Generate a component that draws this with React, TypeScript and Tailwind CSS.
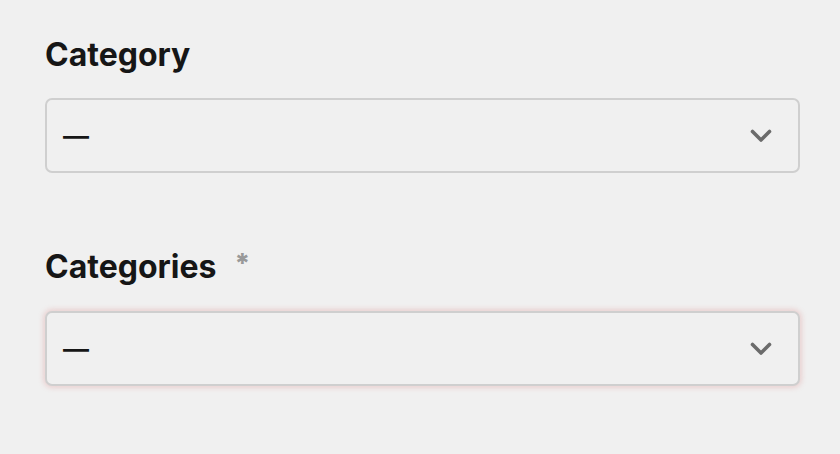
import React from "react";

function Chevron() {
  return (
    <svg width="22" height="14" viewBox="0 0 22 14" fill="none">
      <path d="M2.5 2.5 L11 11 L19.5 2.5" stroke="#6b6b6b" strokeWidth="3.6" strokeLinecap="round" strokeLinejoin="round" />
    </svg>
  );
}

function Select({ invalid }: { invalid?: boolean }) {
  return (
    <div
      className={
        "w-[755px] h-[75px] rounded-[7px] border-2 border-[#cfcfcf] bg-[#f0f0f0] flex items-center justify-between pl-[16px] pr-[26px] " +
        (invalid ? "shadow-[0_0_5px_2px_rgba(220,130,130,0.28)]" : "")
      }
    >
      <span className="text-[26px] leading-none font-semibold text-[#161616]">—</span>
      <Chevron />
    </div>
  );
}

export default function App() {
  return (
    <div
      className="w-[840px] h-[454px] bg-[#f0f0f0] pl-[45px] pt-[35px]"
      style={{ fontFamily: "Inter, 'Noto Sans', sans-serif" }}
    >
      <div className="flex flex-col">
        <div className="text-[32px] leading-[40px] font-bold text-[#161616]">Category</div>
        <div className="mt-[23px]">
          <Select />
        </div>
        <div className="mt-[74px] flex items-start gap-[18px]">
          <span className="text-[32px] leading-[40px] font-bold text-[#161616]">Categories</span>
          <span className="text-[27px] leading-[40px] font-extrabold text-[#999999] -mt-[3px]">*</span>
        </div>
        <div className="mt-[24px]">
          <Select invalid />
        </div>
      </div>
    </div>
  );
}
